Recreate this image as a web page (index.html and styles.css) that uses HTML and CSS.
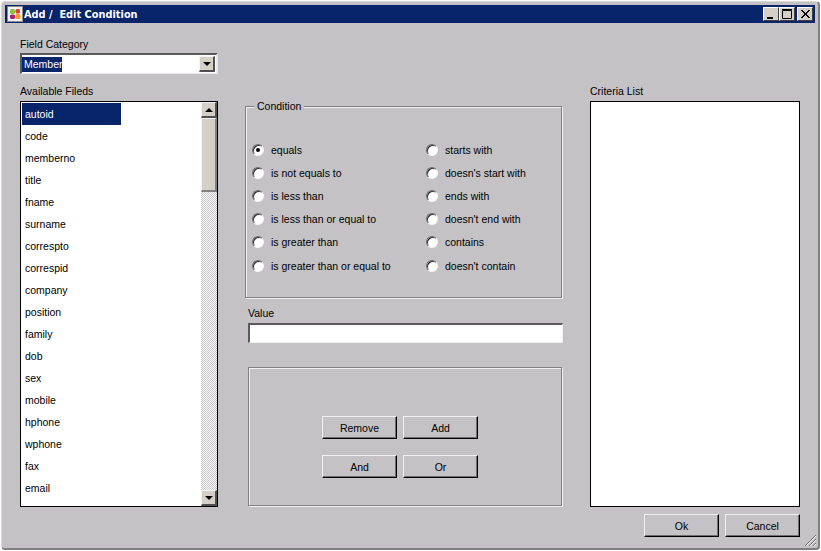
FILE: index.html
```html
<!DOCTYPE html>
<html lang="en">
<head>
    <meta charset="UTF-8">
    <title>Add / Edit Condition</title>
    <link rel="stylesheet" href="styles.css">
</head>
<body>
    <div class="window">
        <div class="titlebar">
            <span class="app-icon">
                <svg width="16" height="16" viewBox="0 0 16 16">
                    <rect x="0.5" y="0.5" width="15" height="15" fill="#f4f2f2" stroke="#8a8a8a"/>
                    <rect x="3" y="3" width="5" height="5" rx="1.5" fill="#8fc23c"/>
                    <rect x="8.5" y="3" width="4.5" height="4.5" rx="1.5" fill="#e0402c"/>
                    <rect x="3" y="8.5" width="5" height="4.5" rx="1.5" fill="#a5246f"/>
                    <rect x="8.5" y="8" width="5" height="5" rx="1.5" fill="#f29a1f"/>
                </svg>
            </span>
            <span class="title">Add /&nbsp; Edit Condition</span>
            <div class="caption-buttons">
                <span class="caption-btn">
                    <svg width="14" height="12" viewBox="0 0 14 12"><rect x="3" y="9" width="6" height="2" fill="#000"/></svg>
                </span>
                <span class="caption-btn">
                    <svg width="14" height="12" viewBox="0 0 14 12"><path d="M2.5 2.5h9v8h-9z M2 1.5h10" fill="none" stroke="#000"/></svg>
                </span>
                <span class="caption-btn caption-close">
                    <svg width="14" height="12" viewBox="0 0 14 12"><path d="M3 2l8 8M4 2l8 8M11 2l-8 8M12 2l-8 8" fill="none" stroke="#000"/></svg>
                </span>
            </div>
        </div>

        <div class="content">
            <div class="col-left">
                <div class="label">Field Category</div>
                <div class="combo">
                    <span class="combo-text"><span class="combo-selected">Member</span></span>
                    <span class="scroll-btn"><span class="arrow-down"></span></span>
                </div>
                <div class="label label-fields">Available Fileds</div>
                <div class="listbox">
                    <ul class="items">
                        <li class="selected">autoid</li>
                        <li>code</li>
                        <li>memberno</li>
                        <li>title</li>
                        <li>fname</li>
                        <li>surname</li>
                        <li>correspto</li>
                        <li>correspid</li>
                        <li>company</li>
                        <li>position</li>
                        <li>family</li>
                        <li>dob</li>
                        <li>sex</li>
                        <li>mobile</li>
                        <li>hphone</li>
                        <li>wphone</li>
                        <li>fax</li>
                        <li>email</li>
                        <li>website</li>
                    </ul>
                    <div class="scrollbar">
                        <span class="scroll-btn"><span class="arrow-up"></span></span>
                        <span class="scroll-thumb"></span>
                        <span class="scroll-track"></span>
                        <span class="scroll-btn"><span class="arrow-down"></span></span>
                    </div>
                </div>
            </div>

            <div class="col-middle">
                <div class="groupbox">
                    <span class="group-title">Condition</span>
                    <div class="radio-grid">
                        <div class="radio-row"><span class="radio checked"></span>equals</div>
                        <div class="radio-row"><span class="radio"></span>starts with</div>
                        <div class="radio-row"><span class="radio"></span>is not equals to</div>
                        <div class="radio-row"><span class="radio"></span>doesn's start with</div>
                        <div class="radio-row"><span class="radio"></span>is less than</div>
                        <div class="radio-row"><span class="radio"></span>ends with</div>
                        <div class="radio-row"><span class="radio"></span>is less than or equal to</div>
                        <div class="radio-row"><span class="radio"></span>doesn't end with</div>
                        <div class="radio-row"><span class="radio"></span>is greater than</div>
                        <div class="radio-row"><span class="radio"></span>contains</div>
                        <div class="radio-row"><span class="radio"></span>is greater than or equal to</div>
                        <div class="radio-row"><span class="radio"></span>doesn't contain</div>
                    </div>
                </div>
                <div class="value-section">
                    <div class="label">Value</div>
                    <div class="textbox"></div>
                </div>
                <div class="action-panel">
                    <div class="action-grid">
                        <button class="btn">Remove</button>
                        <button class="btn">Add</button>
                        <button class="btn">And</button>
                        <button class="btn">Or</button>
                    </div>
                </div>
            </div>

            <div class="col-right">
                <div class="label">Criteria List</div>
                <div class="criteria-box"></div>
                <div class="dialog-buttons">
                    <button class="btn">Ok</button>
                    <button class="btn">Cancel</button>
                </div>
            </div>
        </div>

        <svg class="grip" width="13" height="13" viewBox="0 0 13 13">
            <path d="M12 1L1 12M12 5L5 12M12 9L9 12" stroke="#6e6e6e" fill="none"/>
            <path d="M12 2L2 12M12 6L6 12M12 10L10 12" stroke="#f4f4f4" fill="none"/>
        </svg>
    </div>
</body>
</html>
```

FILE: styles.css
```css
* {
    box-sizing: border-box;
}

html, body {
    margin: 0;
    height: 100%;
}

body {
    width: 821px;
    height: 551px;
    overflow: hidden;
    background-color: #ffffff;
    font-family: "Liberation Sans", Arial, sans-serif;
    font-size: 10.5px;
    color: #000000;
}

.window {
    position: relative;
    width: 819px;
    height: 549px;
    margin: 1px 0 0 1px;
    padding: 3px 0 0 3px;
    background-color: #c4c2c5;
    border-top: 1px solid #d8d8d8;
    border-left: 1px solid #d8d8d8;
    border-right: 2px solid #808080;
    border-bottom: 2px solid #808080;
    border-radius: 4px;
}

.titlebar {
    display: flex;
    align-items: center;
    height: 18px;
    margin-right: 3px;
    padding: 0 2px 0 2px;
    background-color: #08246b;
    color: #ffffff;
}

.app-icon {
    display: flex;
    width: 16px;
    height: 16px;
}

.title {
    margin-left: 1px;
    font-family: "DejaVu Sans", sans-serif;
    font-size: 9.8px;
    font-weight: bold;
}

.caption-buttons {
    display: flex;
    margin-left: auto;
}

.caption-btn {
    display: flex;
    width: 16px;
    height: 14px;
    background-color: #d4d0c8;
    border-top: 1px solid #ffffff;
    border-left: 1px solid #ffffff;
    border-right: 1px solid #404040;
    border-bottom: 1px solid #404040;
}

.caption-close {
    margin-left: 2px;
}

.caption-btn svg {
    display: block;
}

.content {
    display: grid;
    grid-template-columns: 198px 318px 210px;
    column-gap: 27px;
    padding: 0 0 0 15px;
}

.label {
    height: 13px;
    line-height: 13px;
}

.col-left {
    padding-top: 15px;
}

.combo {
    display: flex;
    align-items: center;
    height: 21px;
    margin-top: 2px;
    padding: 0 1px 0 0;
    background-color: #ffffff;
    border-top: 2px solid #5a5a5a;
    border-left: 2px solid #5a5a5a;
    border-right: 2px solid #e8e8e8;
    border-bottom: 1px solid #e8e8e8;
}

.combo-text {
    flex: 1;
}

.combo-selected {
    display: inline-block;
    width: 40px;
    height: 15px;
    line-height: 15px;
    padding: 0 2px;
    background-color: #08246b;
    color: #ffffff;
}

.label-fields {
    margin-top: 11px;
}

.listbox {
    display: flex;
    height: 406px;
    margin-top: 3px;
    background-color: #ffffff;
    border: 1px solid #000000;
    overflow: hidden;
}

.items {
    flex: 1;
    margin: 0;
    padding: 1px 0 0 1px;
    list-style: none;
    overflow: hidden;
}

.items li {
    height: 22px;
    line-height: 22px;
    padding-left: 3px;
}

.items li.selected {
    width: 99px;
    background-color: #08246b;
    color: #ffffff;
}

.scrollbar {
    display: flex;
    flex-direction: column;
    width: 16px;
    background-color: #ffffff;
    background-image: repeating-conic-gradient(#c4c2c5 0 25%, #ffffff 0 50%);
    background-size: 2px 2px;
}

.scroll-btn {
    display: flex;
    align-items: center;
    justify-content: center;
    flex: none;
    width: 16px;
    height: 16px;
    background-color: #d4d0c8;
    border-top: 1px solid #f4f4f4;
    border-left: 1px solid #f4f4f4;
    border-right: 2px solid #505050;
    border-bottom: 2px solid #505050;
}

.scroll-thumb {
    flex: none;
    height: 74px;
    background-color: #d4d0c8;
    border-top: 1px solid #f4f4f4;
    border-left: 1px solid #f4f4f4;
    border-right: 2px solid #808080;
    border-bottom: 2px solid #808080;
}

.scroll-track {
    flex: 1;
}

.arrow-down,
.arrow-up {
    width: 0;
    height: 0;
    border-left: 4px solid transparent;
    border-right: 4px solid transparent;
}

.arrow-down {
    border-top: 4px solid #000000;
}

.arrow-up {
    border-bottom: 4px solid #000000;
}

.col-middle {
    padding-top: 83px;
}

.groupbox {
    position: relative;
    width: 317px;
    height: 192px;
    border: 1px solid #808080;
    box-shadow: 1px 1px 0 #f0f0f0, inset 1px 1px 0 #f0f0f0;
    padding: 31px 0 0 6px;
}

.group-title {
    position: absolute;
    top: -7px;
    left: 8px;
    padding: 0 3px;
    background-color: #c4c2c5;
    line-height: 13px;
}

.radio-grid {
    display: grid;
    grid-template-columns: 174px 130px;
    grid-auto-rows: 23.2px;
}

.radio-row {
    display: flex;
    align-items: center;
    white-space: nowrap;
}

.radio {
    position: relative;
    flex: none;
    width: 12px;
    height: 12px;
    margin-right: 7px;
    border-radius: 50%;
    background-color: #ffffff;
    border: 1px solid;
    border-color: #6a6a6a #f4f4f4 #f4f4f4 #6a6a6a;
    box-shadow: inset 1px 1px 0 #303030;
}

.radio.checked::after {
    content: "";
    position: absolute;
    top: 3px;
    left: 3px;
    width: 4px;
    height: 4px;
    border-radius: 50%;
    background-color: #000000;
}

.value-section {
    margin: 9px 0 0 3px;
}

.textbox {
    width: 315px;
    height: 20px;
    margin-top: 3px;
    background-color: #ffffff;
    border-top: 2px solid #5a5a5a;
    border-left: 2px solid #5a5a5a;
    border-right: 1px solid #f0f0f0;
    border-bottom: 1px solid #f0f0f0;
}

.action-panel {
    width: 314px;
    height: 139px;
    margin: 24px 0 0 3px;
    padding: 48px 0 0 73px;
    border: 1px solid #808080;
    box-shadow: 1px 1px 0 #f0f0f0, inset 1px 1px 0 #f0f0f0;
}

.action-grid {
    display: grid;
    grid-template-columns: 75px 75px;
    grid-auto-rows: 23px;
    column-gap: 6px;
    row-gap: 16px;
}

.btn {
    width: 75px;
    height: 23px;
    padding: 0;
    font-family: inherit;
    font-size: 10.5px;
    color: #000000;
    background-color: #c4c2c5;
    border-top: 1px solid #f0f0f0;
    border-left: 1px solid #f0f0f0;
    border-right: 1px solid #000000;
    border-bottom: 1px solid #000000;
    box-shadow: inset -1px -1px 0 #707070;
}

.col-right {
    padding-top: 62px;
}

.criteria-box {
    height: 406px;
    margin-top: 3px;
    background-color: #ffffff;
    border: 1px solid #000000;
}

.dialog-buttons {
    display: flex;
    justify-content: flex-end;
    gap: 6px;
    margin-top: 7px;
}

.grip {
    position: absolute;
    right: 1px;
    bottom: 1px;
}
```
